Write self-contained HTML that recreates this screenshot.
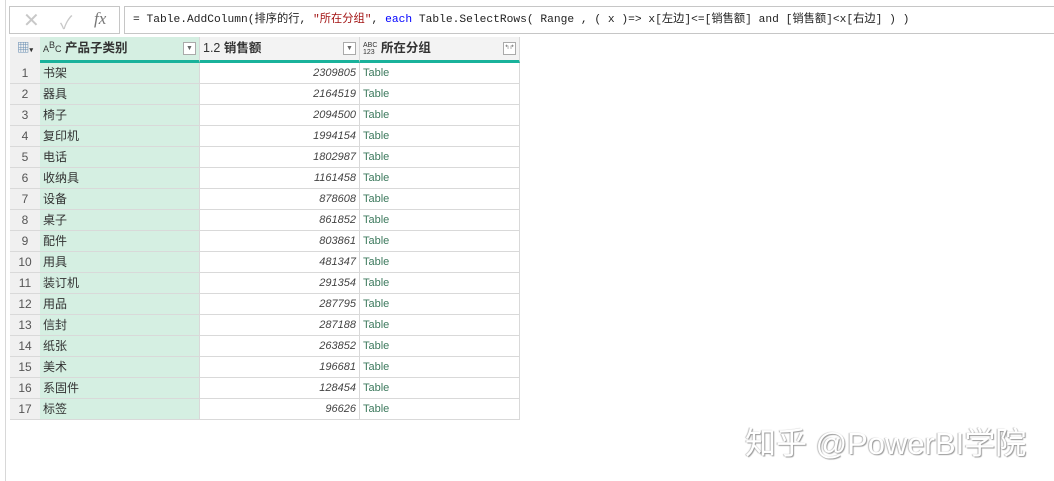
<!DOCTYPE html>
<html><head><meta charset="utf-8"><style>
*{margin:0;padding:0;box-sizing:border-box}
body{width:1054px;height:481px;background:#fff;position:relative;overflow:hidden;font-family:"Liberation Sans","Noto Sans CJK SC",sans-serif;font-size:12px;color:#333}
.a{position:absolute}
.vl{left:5px;top:0;width:1px;height:481px;background:#d8d8d8}
.btns{left:9px;top:6px;width:111px;height:28px;border:1px solid #c6c6c6}
.fb{left:124px;top:6px;width:940px;height:28px;border:1px solid #c6c6c6;font-family:"Liberation Mono","Noto Sans CJK SC",monospace;font-size:11.25px;line-height:26px;padding-left:8px;color:#222;white-space:nowrap}
.tbl{position:absolute;left:10px;top:37px;width:510px}
.r{display:flex;height:21px}
.r>div{height:21px;line-height:20px;border-bottom:1px solid #d9d9d9;border-right:1px solid #d9d9d9;padding:0 3px;white-space:nowrap;position:relative}
.i{width:30px;background:#f0f0f0;text-align:center;color:#555;border-right:none!important}
.c1{width:160px;background:#d5efe2}
.c2{width:160px;text-align:right;font-style:italic;color:#444;font-size:11px}
.c3{width:160px;color:#3d7a5e;font-size:11px}
.r.h{height:26px}
.r.h>div{height:26px;line-height:23px;background:#f3f3f3;border-bottom:3px solid #19b29b;font-weight:bold;font-size:12.5px;color:#333}
.r.h>.i{border-bottom:3px solid #f0f0f0;background:#f0f0f0}
.r.h>.c1{background:#d5efe2}
.ab{display:inline-block;font-size:9px;font-weight:normal;line-height:10px;vertical-align:middle}
.dd{position:absolute;top:5px;width:13px;height:13px;border:1px solid #aaa;background:#fff;font-size:7px;line-height:11px;text-align:center;color:#666;font-weight:normal;font-style:normal}
.wm{left:745px;top:418px;font-size:31px;color:#fff;text-shadow:1px 1px 1px #999,-1px 0 1px #bbb;font-family:"Liberation Sans","Noto Sans CJK SC",sans-serif;white-space:nowrap}
</style></head><body>
<div class="a vl"></div>
<div class="a btns">
<span class="a" style="left:13px;top:1px;font-size:20px;color:#c8c8c8">✕</span>
<span class="a" style="left:50px;top:2px;font-size:18px;color:#c8c8c8">✓</span>
<span class="a" style="left:84px;top:2px;font-size:17px;color:#777;font-style:italic;font-family:'Liberation Serif',serif">fx</span>
</div>
<div class="a fb">= Table.AddColumn(排序的行, <span style="color:#a31515">"所在分组"</span>, <span style="color:#0000ff">each</span> Table.SelectRows( Range , ( x )=&gt; x[左边]&lt;=[销售额] and [销售额]&lt;x[右边] ) )</div>
<div class="tbl">
<div class="r h"><div class="i"><span style="color:#6a8fb3">▦</span><span style="font-size:7px">▾</span></div>
<div class="c1"><span class="ab">A<span style="position:relative;top:-4px">B</span>C</span> 产品子类别<span class="dd" style="right:3px">▼</span></div>
<div class="c2" style="text-align:left;font-style:normal;font-size:12.5px"><span style="font-weight:normal">1.2</span> 销售额<span class="dd" style="right:3px">▼</span></div>
<div class="c3" style="color:#333;font-size:12.5px"><span style="font-size:7px;font-weight:normal;display:inline-block;line-height:7px;vertical-align:middle">ABC<br>123</span> 所在分组<span class="dd" style="right:3px;font-size:6px">↰↱</span></div></div>
<div class="r"><div class="i">1</div><div class="c1">书架</div><div class="c2">2309805</div><div class="c3">Table</div></div>
<div class="r"><div class="i">2</div><div class="c1">器具</div><div class="c2">2164519</div><div class="c3">Table</div></div>
<div class="r"><div class="i">3</div><div class="c1">椅子</div><div class="c2">2094500</div><div class="c3">Table</div></div>
<div class="r"><div class="i">4</div><div class="c1">复印机</div><div class="c2">1994154</div><div class="c3">Table</div></div>
<div class="r"><div class="i">5</div><div class="c1">电话</div><div class="c2">1802987</div><div class="c3">Table</div></div>
<div class="r"><div class="i">6</div><div class="c1">收纳具</div><div class="c2">1161458</div><div class="c3">Table</div></div>
<div class="r"><div class="i">7</div><div class="c1">设备</div><div class="c2">878608</div><div class="c3">Table</div></div>
<div class="r"><div class="i">8</div><div class="c1">桌子</div><div class="c2">861852</div><div class="c3">Table</div></div>
<div class="r"><div class="i">9</div><div class="c1">配件</div><div class="c2">803861</div><div class="c3">Table</div></div>
<div class="r"><div class="i">10</div><div class="c1">用具</div><div class="c2">481347</div><div class="c3">Table</div></div>
<div class="r"><div class="i">11</div><div class="c1">装订机</div><div class="c2">291354</div><div class="c3">Table</div></div>
<div class="r"><div class="i">12</div><div class="c1">用品</div><div class="c2">287795</div><div class="c3">Table</div></div>
<div class="r"><div class="i">13</div><div class="c1">信封</div><div class="c2">287188</div><div class="c3">Table</div></div>
<div class="r"><div class="i">14</div><div class="c1">纸张</div><div class="c2">263852</div><div class="c3">Table</div></div>
<div class="r"><div class="i">15</div><div class="c1">美术</div><div class="c2">196681</div><div class="c3">Table</div></div>
<div class="r"><div class="i">16</div><div class="c1">系固件</div><div class="c2">128454</div><div class="c3">Table</div></div>
<div class="r"><div class="i">17</div><div class="c1">标签</div><div class="c2">96626</div><div class="c3">Table</div></div>
</div>
<div class="a wm">知乎 @PowerBI学院</div>
</body></html>
